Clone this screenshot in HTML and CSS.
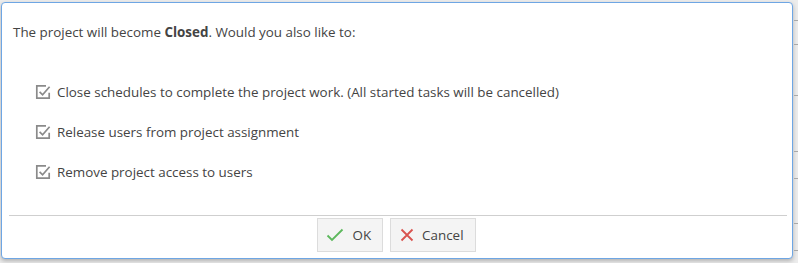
FILE: index.html
```html
<!DOCTYPE html>
<html lang="en">
<head>
    <meta charset="UTF-8">
    <title>Close project</title>
    <link rel="stylesheet" href="styles.css">
</head>
<body>
<div class="page">
    <div class="dialog">
        <div class="dialog-body">
            <p class="question">The project will become <b>Closed</b>. Would you also like to:</p>
            <ul class="options">
                <li class="option">
                    <svg class="box" width="16" height="16" viewBox="0 0 16 16"><path d="M11 1.8H1.8V14.2H14.2V8.8" fill="none" stroke="#8a8a8a" stroke-width="1.7"/><path d="M4.6 7.8L7.6 10.8L14.6 2.8" fill="none" stroke="#8a8a8a" stroke-width="1.7"/></svg>
                    <span>Close schedules to complete the project work. (All started tasks will be cancelled)</span>
                </li>
                <li class="option">
                    <svg class="box" width="16" height="16" viewBox="0 0 16 16"><path d="M11 1.8H1.8V14.2H14.2V8.8" fill="none" stroke="#8a8a8a" stroke-width="1.7"/><path d="M4.6 7.8L7.6 10.8L14.6 2.8" fill="none" stroke="#8a8a8a" stroke-width="1.7"/></svg>
                    <span>Release users from project assignment</span>
                </li>
                <li class="option">
                    <svg class="box" width="16" height="16" viewBox="0 0 16 16"><path d="M11 1.8H1.8V14.2H14.2V8.8" fill="none" stroke="#8a8a8a" stroke-width="1.7"/><path d="M4.6 7.8L7.6 10.8L14.6 2.8" fill="none" stroke="#8a8a8a" stroke-width="1.7"/></svg>
                    <span>Remove project access to users</span>
                </li>
            </ul>
        </div>
        <div class="dialog-footer">
            <button class="btn" type="button">
                <svg width="18" height="14" viewBox="0 0 18 14"><path d="M1.5 7.5L6 12L16.5 1.5" fill="none" stroke="#5cb85c" stroke-width="1.8"/></svg>
                OK
            </button>
            <button class="btn" type="button">
                <svg width="14" height="14" viewBox="0 0 14 14"><path d="M1.5 1.5L12.5 12.5M12.5 1.5L1.5 12.5" fill="none" stroke="#d9534f" stroke-width="1.8"/></svg>
                Cancel
            </button>
        </div>
    </div>
    <div class="backdrop-rows">
        <div style="height: 21px"></div>
        <div style="height: 24px"></div>
        <div style="height: 51px"></div>
        <div style="height: 56px"></div>
        <div style="height: 27px"></div>
        <div style="height: 45px"></div>
        <div style="height: 27px"></div>
    </div>
</div>
</body>
</html>
```

FILE: styles.css
```css
body {
    margin: 0;
    background-color: #ececec;
    font-family: "Open Sans", sans-serif;
    font-size: 13.4px;
    color: #444;
}

.page {
    display: flex;
    align-items: flex-start;
    height: 263px;
    overflow: hidden;
}

.dialog {
    width: 790px;
    height: 255px;
    margin: 2px 0 0 1px;
    background-color: #fff;
    border: 1px solid #6ea6e4;
    border-radius: 4px;
    box-shadow: 0 2px 4px rgba(0, 0, 0, 0.25);
    display: flex;
    flex-direction: column;
    flex-shrink: 0;
}

.dialog-body {
    flex: 1;
    padding: 20px 11px 0 11px;
}

.question {
    margin: 0;
    line-height: 18px;
}

.question b {
    font-weight: 700;
}

.options {
    list-style: none;
    margin: 0;
    padding: 42px 0 0 22px;
}

.option {
    display: flex;
    align-items: center;
    gap: 6px;
    height: 18px;
    margin-bottom: 22px;
}

.option:nth-child(3) {
    margin-top: 2px;
}

.box {
    flex-shrink: 0;
}

.dialog-footer {
    margin: 0 5px 0 7px;
    border-top: 1px solid #cfcfcf;
    padding: 2px 3px 6px 0;
    display: flex;
    justify-content: center;
    gap: 7px;
}

.btn {
    display: flex;
    align-items: center;
    gap: 8px;
    height: 34px;
    padding: 0 11px 0 8px;
    background-color: #f4f4f4;
    border: 1px solid #dcdcdc;
    border-radius: 0;
    font-family: "Open Sans", sans-serif;
    font-size: 13.4px;
    color: #444;
}

.btn:last-child {
    padding-left: 9px;
}

.backdrop-rows {
    flex: 1;
    margin-left: 1px;
}

.backdrop-rows div {
    border-bottom: 1px solid #a9a9a9;
    box-sizing: border-box;
}
```
